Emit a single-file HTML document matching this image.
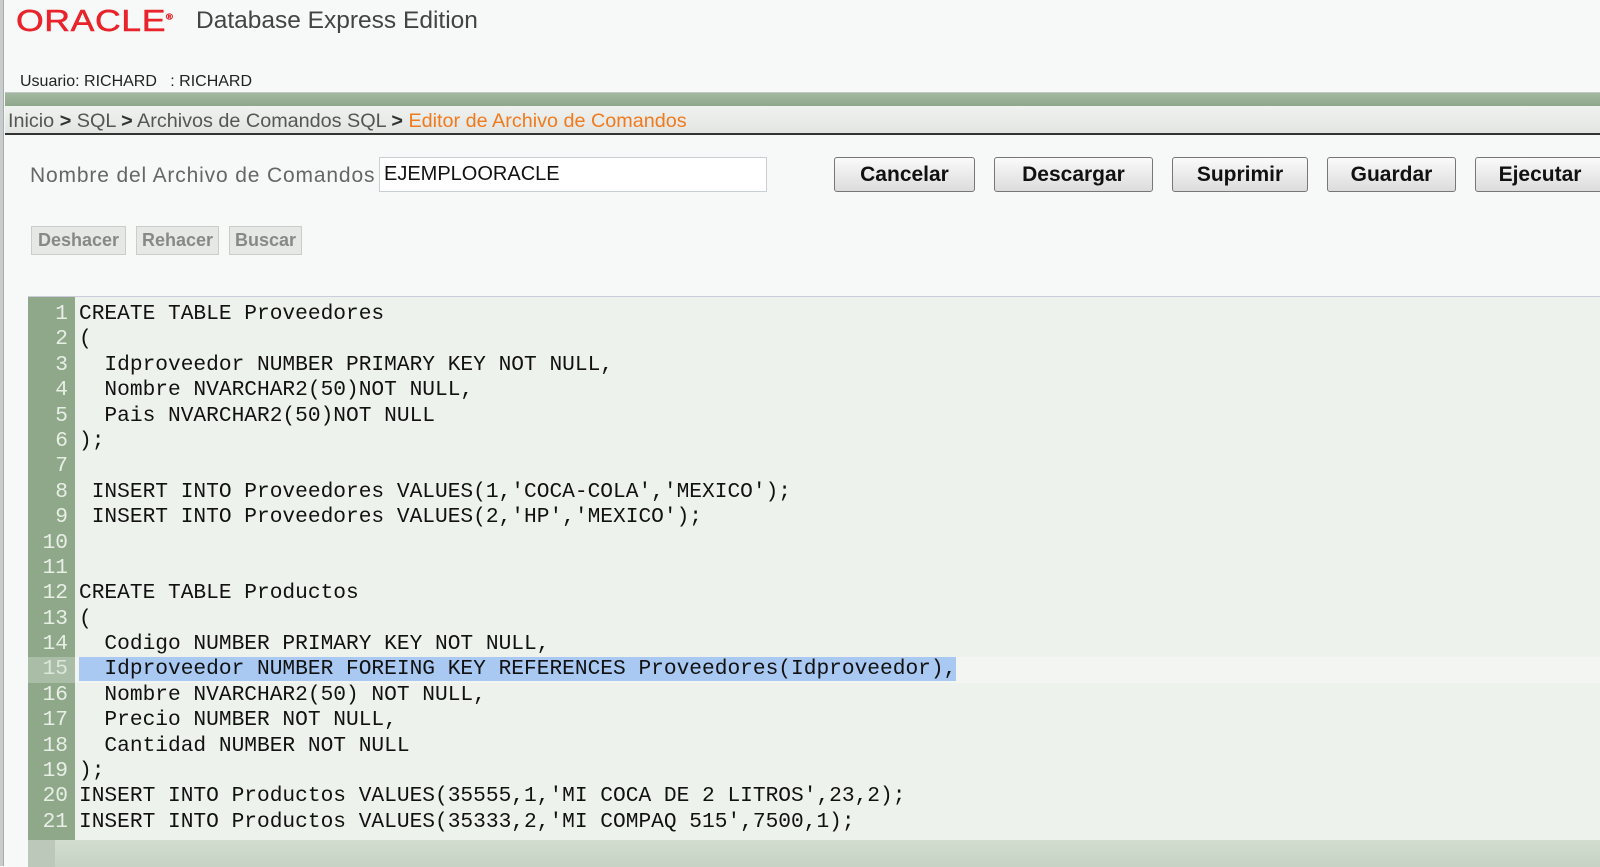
<!DOCTYPE html>
<html><head><meta charset="utf-8"><style>
*{margin:0;padding:0;box-sizing:border-box}
body{width:1600px;height:866px;overflow:hidden;background:#f7f9f9;font-family:"Liberation Sans",sans-serif;position:relative}
.lb{position:absolute;left:0;top:0;width:4px;height:866px;background:#c8cccc;border-right:1px solid #a8acac}
.abs{position:absolute;white-space:nowrap}
.oracle{left:16px;top:3px;font-size:31px;color:#e8232a;letter-spacing:0.5px;transform:scaleX(1.15);transform-origin:left;-webkit-text-stroke:0.5px #e8232a}
.title{left:196px;top:7px;font-size:24.5px;color:#444}
.user{left:20px;top:73px;font-size:16px;color:#222}
.gbar{left:5px;top:92px;width:1595px;height:14px;background:linear-gradient(#a3b8a0,#8ea78b);border-top:1px solid #c0c8c0}
.crumb{left:5px;top:106px;width:1595px;height:29px;background:linear-gradient(#f0f2f0,#e2e5e2);border-bottom:2px solid #333;font-size:19.8px;color:#555;padding:4px 0 0 3px}
.crumb b{color:#333}
.crumb span.o{color:#f07a1e}
.lbl{left:30px;top:164px;font-size:21px;letter-spacing:0.85px;color:#666}
.inp{left:379px;top:157px;width:388px;height:35px;border:1px solid #c8d0d4;background:#fff;font-size:20px;color:#111;padding:5px 4px}
.btn{position:absolute;top:157px;height:35px;border:1px solid #777;border-radius:3px;background:linear-gradient(#fafafa,#dcdcdc);font-size:21px;font-weight:bold;color:#111;text-align:center;line-height:33px}
.sb{position:absolute;top:226px;height:29px;border:1px solid #ccc;background:#e6e8e6;font-size:18px;color:#888;text-align:center;line-height:27px;font-weight:bold}
.ed{left:28px;top:296px;width:1572px;height:570px;background:#eef2ec;border-top:1px solid #ccd}
.gut{position:absolute;left:0;top:0;width:47px;height:543px;background:#8fa88a}
.code{position:absolute;left:0;top:5px;font-family:"Liberation Mono",monospace;font-size:21.2px;color:#111}
.ln{height:25.4px;line-height:25.4px;position:relative;white-space:pre}
.ln i{font-style:normal;display:inline-block;width:40px;text-align:right;color:#e8efe6;padding-right:0;margin-right:11px}
.hl{background:#f2f5f1;width:1572px}
.hl i{background:#aabda6;width:47px;padding-right:7px;margin-right:4px;color:#dce7dc}
.hl s{text-decoration:none;background:#a9c9f2}
.bot{position:absolute;left:0;top:543px;width:1572px;height:27px;background:linear-gradient(#d2ddd0,#c6d3c4)}
.bot div{position:absolute;left:0;top:0;width:27px;height:27px;background:#bcc9ba}
</style></head><body>
<div class="lb"></div>
<div class="abs oracle">ORACLE<sup style="font-size:8px">®</sup></div>
<div class="abs title">Database Express Edition</div>
<div class="abs user">Usuario: RICHARD&nbsp;&nbsp;&nbsp;: RICHARD</div>
<div class="abs gbar"></div>
<div class="abs crumb">Inicio <b>&gt;</b> SQL <b>&gt;</b> Archivos de Comandos SQL <b>&gt;</b> <span class="o">Editor de Archivo de Comandos</span></div>
<div class="abs lbl">Nombre del Archivo de Comandos</div>
<div class="abs inp">EJEMPLOORACLE</div>
<div class="btn" style="left:834px;width:141px">Cancelar</div>
<div class="btn" style="left:994px;width:159px">Descargar</div>
<div class="btn" style="left:1172px;width:136px">Suprimir</div>
<div class="btn" style="left:1327px;width:129px">Guardar</div>
<div class="btn" style="left:1475px;width:130px">Ejecutar</div>
<div class="sb" style="left:31px;width:95px">Deshacer</div>
<div class="sb" style="left:136px;width:83px">Rehacer</div>
<div class="sb" style="left:229px;width:73px">Buscar</div>
<div class="abs ed">
<div class="gut"></div>
<div class="code">
<div class="ln"><i>1</i>CREATE TABLE Proveedores</div>
<div class="ln"><i>2</i>(</div>
<div class="ln"><i>3</i>  Idproveedor NUMBER PRIMARY KEY NOT NULL,</div>
<div class="ln"><i>4</i>  Nombre NVARCHAR2(50)NOT NULL,</div>
<div class="ln"><i>5</i>  Pais NVARCHAR2(50)NOT NULL</div>
<div class="ln"><i>6</i>);</div>
<div class="ln"><i>7</i></div>
<div class="ln"><i>8</i> INSERT INTO Proveedores VALUES(1,'COCA-COLA','MEXICO');</div>
<div class="ln"><i>9</i> INSERT INTO Proveedores VALUES(2,'HP','MEXICO');</div>
<div class="ln"><i>10</i></div>
<div class="ln"><i>11</i></div>
<div class="ln"><i>12</i>CREATE TABLE Productos</div>
<div class="ln"><i>13</i>(</div>
<div class="ln"><i>14</i>  Codigo NUMBER PRIMARY KEY NOT NULL,</div>
<div class="ln hl"><i>15</i><s>  Idproveedor NUMBER FOREING KEY REFERENCES Proveedores(Idproveedor),</s></div>
<div class="ln"><i>16</i>  Nombre NVARCHAR2(50) NOT NULL,</div>
<div class="ln"><i>17</i>  Precio NUMBER NOT NULL,</div>
<div class="ln"><i>18</i>  Cantidad NUMBER NOT NULL</div>
<div class="ln"><i>19</i>);</div>
<div class="ln"><i>20</i>INSERT INTO Productos VALUES(35555,1,'MI COCA DE 2 LITROS',23,2);</div>
<div class="ln"><i>21</i>INSERT INTO Productos VALUES(35333,2,'MI COMPAQ 515',7500,1);</div>
</div>
<div class="bot"><div></div></div>
</div>
</body></html>
